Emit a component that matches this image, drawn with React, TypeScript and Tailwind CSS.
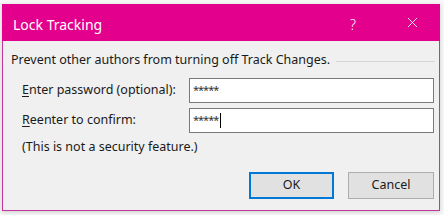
import { X } from "lucide-react";

export default function App() {
  return (
    <div
      className="w-[444px] h-[215px] bg-[#f7f7f7] pt-[4px] pl-[2px]"
      style={{ fontFamily: '"Noto Sans", "Open Sans", sans-serif' }}
    >
      {/* Dialog window */}
      <div className="w-[438px] h-[207px] flex flex-col border border-[#c2389a] bg-[#f0f0f0] shadow-[0_1px_4px_rgba(0,0,0,0.18)]">
        {/* Title bar */}
        <div className="h-[37px] shrink-0 flex items-center bg-[#e3008c] text-white -mx-px -mt-px pt-[3px]">
          <span className="pl-[11px] text-[14px] flex-1">Lock Tracking</span>
          <span className="w-[46px] text-center text-[14px] mr-[13px] font-light">?</span>
          <div className="w-[46px] h-full flex items-center justify-center mr-[5px] -mt-[3px]">
            <X className="w-[17px] h-[17px]" strokeWidth={1.3} />
          </div>
        </div>

        {/* Body */}
        <div className="flex-1 flex flex-col text-[12.5px] text-[#1a1a1a]">
          <div className="flex items-center pl-[8px] pr-[4px] mt-[10px]">
            <span className="whitespace-nowrap">Prevent other authors from turning off Track Changes.</span>
            <div className="flex-1 h-px bg-[#d6d6d6] ml-[6px] mt-[2px]" />
          </div>

          <div className="flex flex-col gap-[5px] pl-[19px] pr-[5px] mt-[8px]">
            <div className="flex items-center">
              <span className="w-[167px] whitespace-nowrap">
                <span className="underline underline-offset-2">E</span>nter password (optional):
              </span>
              <div className="flex-1 h-[25px] bg-white border border-[#7a7a7a] flex items-center pl-[3px] text-[11px] tracking-[-1px] text-[#333]">
                *****
              </div>
            </div>
            <div className="flex items-center">
              <span className="w-[167px] whitespace-nowrap">
                <span className="underline underline-offset-2">R</span>eenter to confirm:
              </span>
              <div className="flex-1 h-[25px] bg-white border border-[#7a7a7a] flex items-center pl-[3px] text-[11px] tracking-[-1px] text-[#333]">
                *****
                <span className="w-px h-[15px] bg-black ml-[2px]" />
              </div>
            </div>
          </div>

          <div className="pl-[19px] mt-[5px]">(This is not a security feature.)</div>

          <div className="flex justify-end gap-[14px] pr-[5px] mt-[15px]">
            <button className="w-[85px] h-[27px] bg-[#e1e1e1] border-2 border-[#0078d7] text-[12.5px]">OK</button>
            <button className="w-[86px] h-[27px] bg-[#e1e1e1] border border-[#adadad] text-[12.5px]">Cancel</button>
          </div>
        </div>
      </div>
    </div>
  );
}
